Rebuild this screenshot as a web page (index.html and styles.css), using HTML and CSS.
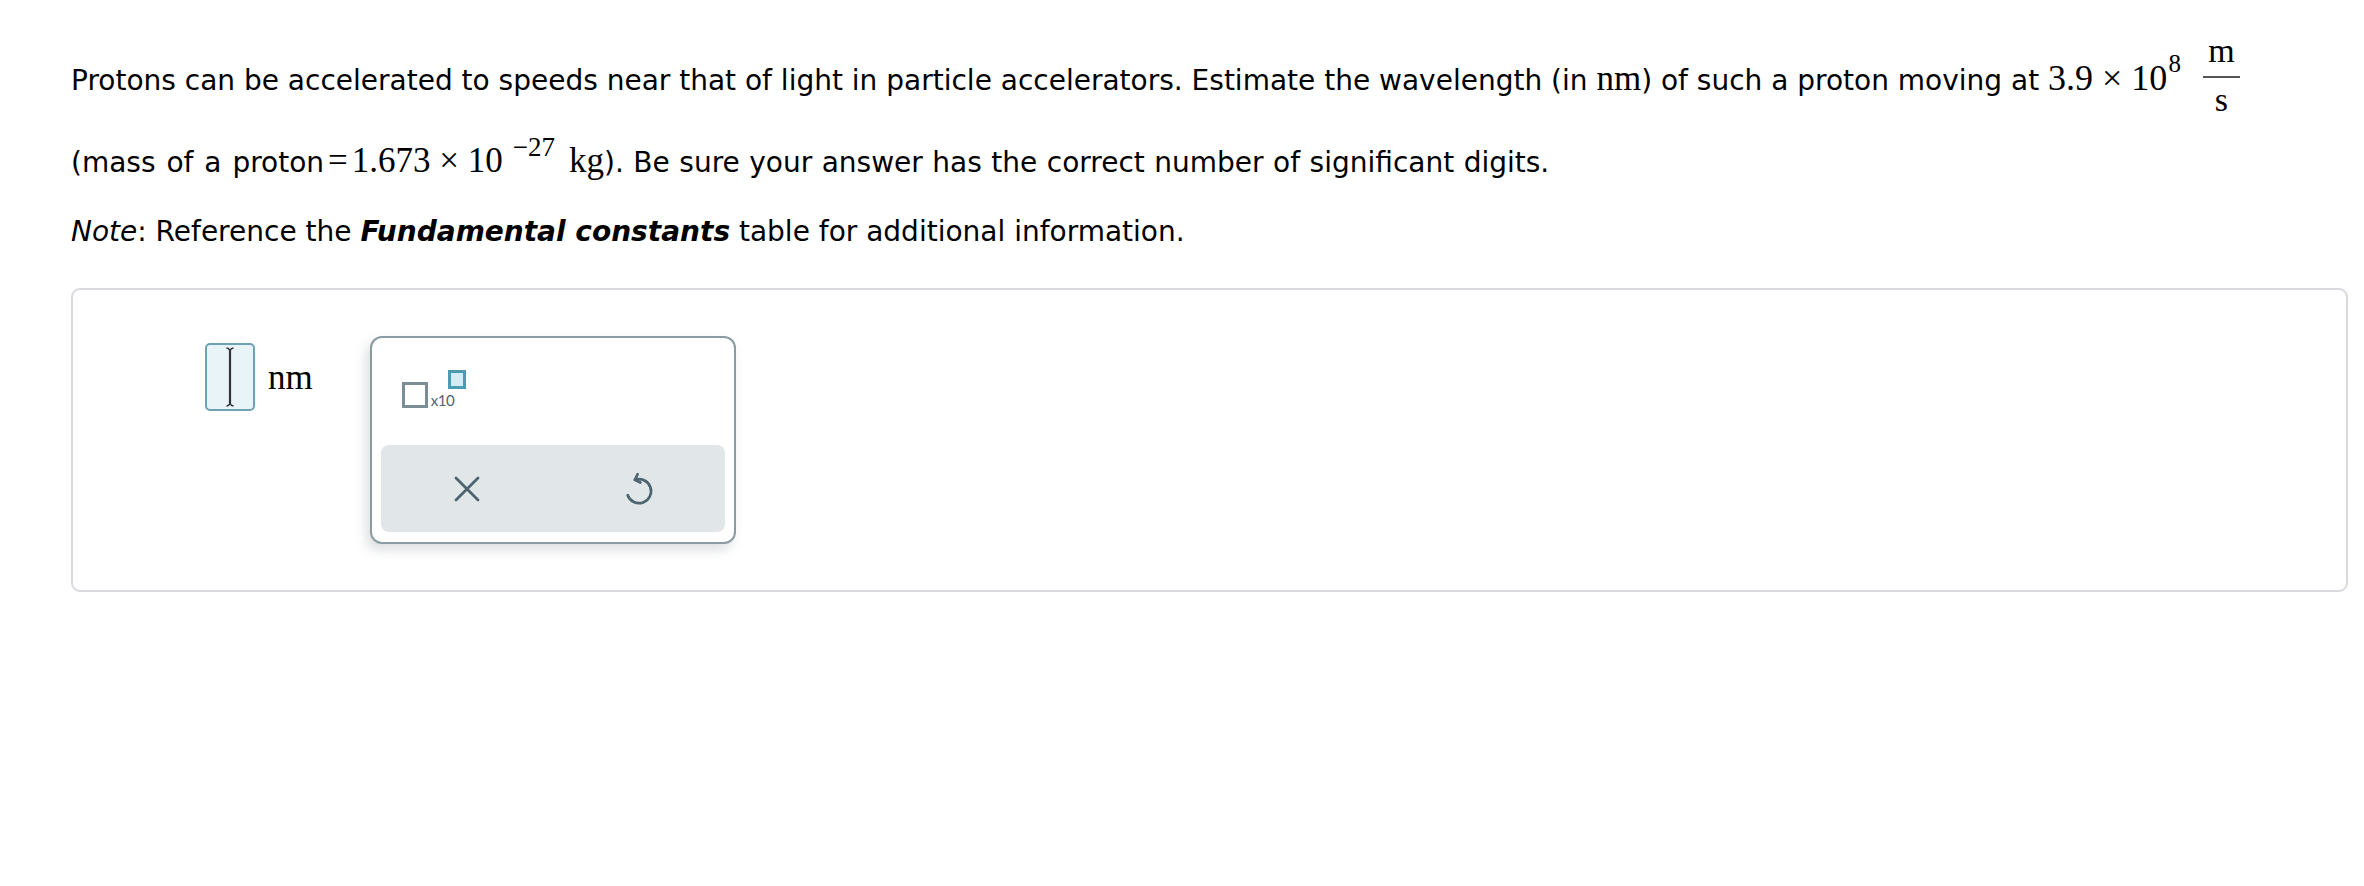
FILE: index.html
```html
<!DOCTYPE html>
<html>
<head>
<meta charset="utf-8">
<link rel="stylesheet" href="styles.css">
</head>
<body>
<div class="page">
  <p class="line l1">Protons can be accelerated to speeds near that of light in particle accelerators. Estimate the wavelength (in <span class="m">nm</span>) of such a proton moving at <span class="m m1">3.9 × 10<span class="sup8">8</span></span><span class="frac"><span class="num">m</span><span class="bar"></span><span class="den">s</span></span></p>
  <p class="line l2"><span class="mt">(mass of a proton</span><span class="m m2"><span class="eq">=</span>1.673 × 10<span class="sup27">−27</span><span class="kg">kg</span></span><span class="tail">). Be sure your answer has the correct number of significant digits.</span></p>
  <p class="line l3"><i>Note</i>: Reference the <b><i>Fundamental constants</i></b> table for additional information.</p>

  <div class="box">
    <div class="answer">
      <div class="input">
        <svg class="ibeam" width="50" height="68" viewBox="0 0 50 68">
          <path d="M21.5 5 Q23 5 25 7 Q27 5 28.5 5 M21.5 63 Q23 63 25 61 Q27 63 28.5 63" fill="none" stroke="#333" stroke-width="1.4"/>
          <line x1="25" y1="6.5" x2="25" y2="61.5" stroke="#333" stroke-width="2.2"/>
        </svg>
      </div>
      <span class="unit">nm</span>
    </div>
    <div class="panel">
      <div class="tpl">
        <span class="base"></span><span class="x10">x10</span><span class="exp"></span>
      </div>
      <div class="actions">
        <div class="btn">
          <svg width="26" height="26" viewBox="0 0 26 26"><path d="M2 2 L24 24 M24 2 L2 24" stroke="#4b6470" stroke-width="2.8" stroke-linecap="round" fill="none"/></svg>
        </div>
        <div class="btn">
          <svg width="34" height="34" viewBox="0 0 24 24"><path d="M9.1 5.5 A8.5 8.5 0 1 1 4 16.4" stroke="#4b6470" stroke-width="1.9" stroke-linecap="round" fill="none"/><path d="M11 1.6 L9.1 5.5 L13 7.4" stroke="#4b6470" stroke-width="1.9" stroke-linecap="round" stroke-linejoin="round" fill="none"/></svg>
        </div>
      </div>
    </div>
  </div>
</div>
</body>
</html>
```

FILE: styles.css
```css
html, body {
  margin: 0;
  padding: 0;
  background: #ffffff;
}

.page {
  padding: 0 16px 0 71px;
  font-family: "DejaVu Sans", Verdana, sans-serif;
  font-size: 28px;
  color: #000;
}

.line {
  margin: 0;
  white-space: nowrap;
  line-height: 40px;
}

.l1 {
  margin-top: 34px;
}

.l2 {
  margin-top: 24px;
}

.l3 {
  margin-top: 29px;
}

.m {
  font-family: "Liberation Serif", "Times New Roman", serif;
  font-size: 35px;
}

.m1 {
  font-size: 36px;
}

.m2 {
  font-size: 35px;
}

.sup8 {
  font-size: 25px;
  vertical-align: 18px;
  line-height: 0;
  margin-left: 1px;
}

.sup27 {
  font-size: 27px;
  vertical-align: 16px;
  line-height: 0;
  margin-left: 10px;
}

.kg {
  margin-left: 14px;
}

.eq {
  margin: 0 4px 0 4px;
}

.mt {
  word-spacing: 2px;
}

.tail {
  word-spacing: 0.6px;
}

.frac {
  display: inline-flex;
  flex-direction: column;
  align-items: center;
  vertical-align: 28px;
  margin-left: 22px;
  font-family: "Liberation Serif", "Times New Roman", serif;
  font-size: 34px;
  line-height: 34px;
  width: 37px;
}

.frac .num {
  display: block;
}

.frac .bar {
  display: block;
  width: 37px;
  height: 2px;
  background: #555;
  margin-top: 8px;
}

.frac .den {
  display: block;
  margin-top: 5px;
}

.box {
  margin-top: 36px;
  border: 2px solid #d8dadd;
  border-radius: 9px;
  padding: 46px 0 46px 132px;
  display: flex;
  align-items: flex-start;
}

.answer {
  display: flex;
  align-items: flex-start;
}

.input {
  margin-top: 7px;
  width: 46px;
  height: 64px;
  border: 2px solid #6fa1b4;
  border-radius: 5px;
  background: #e9f4f8;
  overflow: hidden;
}

.ibeam {
  display: block;
  margin: -2px 0 0 -2px;
}

.unit {
  font-family: "Liberation Serif", "Times New Roman", serif;
  font-size: 35px;
  line-height: 35px;
  margin-top: 24px;
  margin-left: 13px;
}

.panel {
  margin-left: 57px;
  width: 344px;
  border: 2px solid #8a9ba4;
  border-radius: 12px;
  padding: 32px 9px 10px 9px;
  background: #fff;
  box-shadow: -4px 6px 12px rgba(60, 80, 90, 0.18);
}

.tpl {
  height: 38px;
  padding-left: 21px;
  display: flex;
  align-items: flex-start;
}

.base {
  display: block;
  width: 20px;
  height: 20px;
  border: 3px solid #7b8d96;
  margin-top: 12px;
}

.x10 {
  font-family: Lato, "Open Sans", sans-serif;
  font-size: 15px;
  line-height: 15px;
  color: #4f6470;
  margin-top: 23px;
  margin-left: 3px;
  letter-spacing: -0.5px;
}

.exp {
  display: block;
  width: 12px;
  height: 13px;
  border: 3px solid #4a9cb3;
  background: #d4edf5;
  margin-left: -6px;
}

.actions {
  margin-top: 37px;
  height: 87px;
  background: #e1e6e9;
  border-radius: 8px;
  display: flex;
}

.btn {
  flex: 1;
  display: flex;
  align-items: center;
  justify-content: center;
}

.btn svg {
  display: block;
}
```
